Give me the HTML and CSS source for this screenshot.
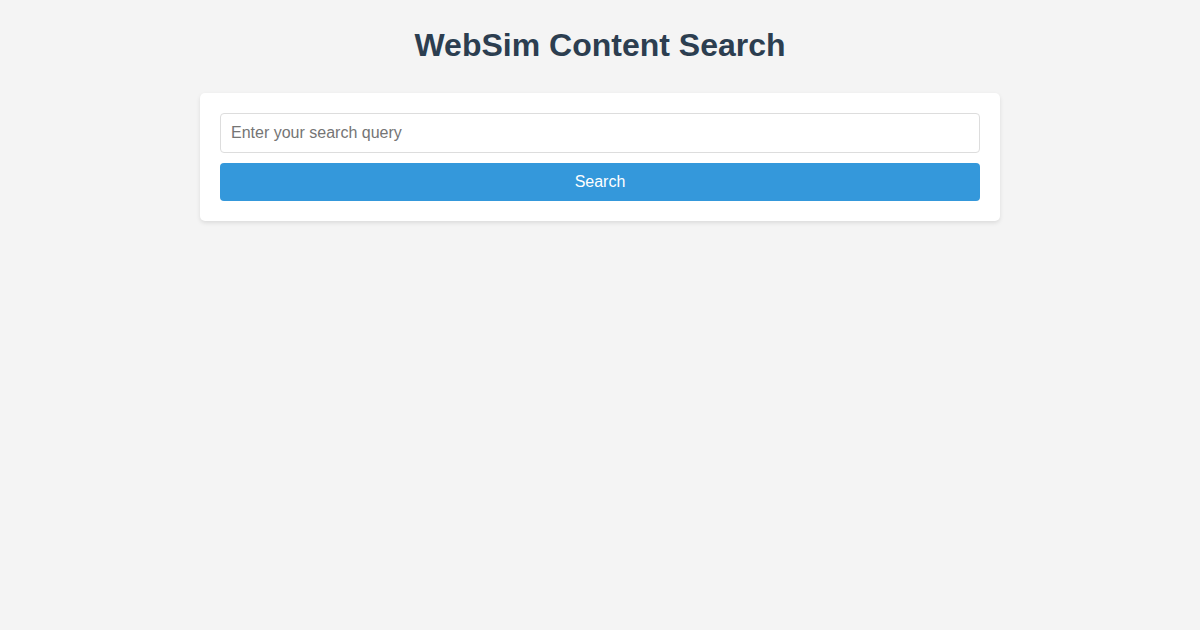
FILE: index.html
```html
<!DOCTYPE html>
<html lang="en">
<head>
<meta charset="utf-8">
<title>WebSim Content Search</title>
<link rel="stylesheet" href="styles.css">
</head>
<body>
<div class="container">
  <h1 class="title">WebSim Content Search</h1>
  <div class="search-card">
    <input class="search-input" type="text" placeholder="Enter your search query">
    <button class="search-button" type="button">Search</button>
  </div>
</div>
</body>
</html>
```
FILE: styles.css
```css
html, body {
  margin: 0;
  padding: 0;
  background: #f4f4f4;
  font-family: "Liberation Sans", Arial, sans-serif;
  color: #333;
}
.container {
  max-width: 800px;
  margin: 0 auto;
  padding: 27px 0 20px;
}
.title {
  margin: 0 0 29px;
  text-align: center;
  font-size: 32px;
  font-weight: bold;
  color: #2c3e50;
}
.search-card {
  background: #fff;
  border-radius: 5px;
  box-shadow: 0 2px 4px rgba(0, 0, 0, 0.1);
  padding: 20px;
  display: flex;
  flex-direction: column;
  gap: 10px;
}
.search-input {
  box-sizing: border-box;
  width: 100%;
  height: 40px;
  padding: 10px;
  font-family: "Liberation Sans", Arial, sans-serif;
  font-size: 16px;
  border: 1px solid #ddd;
  border-radius: 4px;
  color: #333;
  outline: none;
}
.search-input::placeholder {
  color: #757575;
}
.search-button {
  box-sizing: border-box;
  width: 100%;
  height: 38px;
  padding: 10px;
  font-family: "Liberation Sans", Arial, sans-serif;
  font-size: 16px;
  background: #3498db;
  color: #fff;
  border: none;
  border-radius: 4px;
  cursor: pointer;
}
```
